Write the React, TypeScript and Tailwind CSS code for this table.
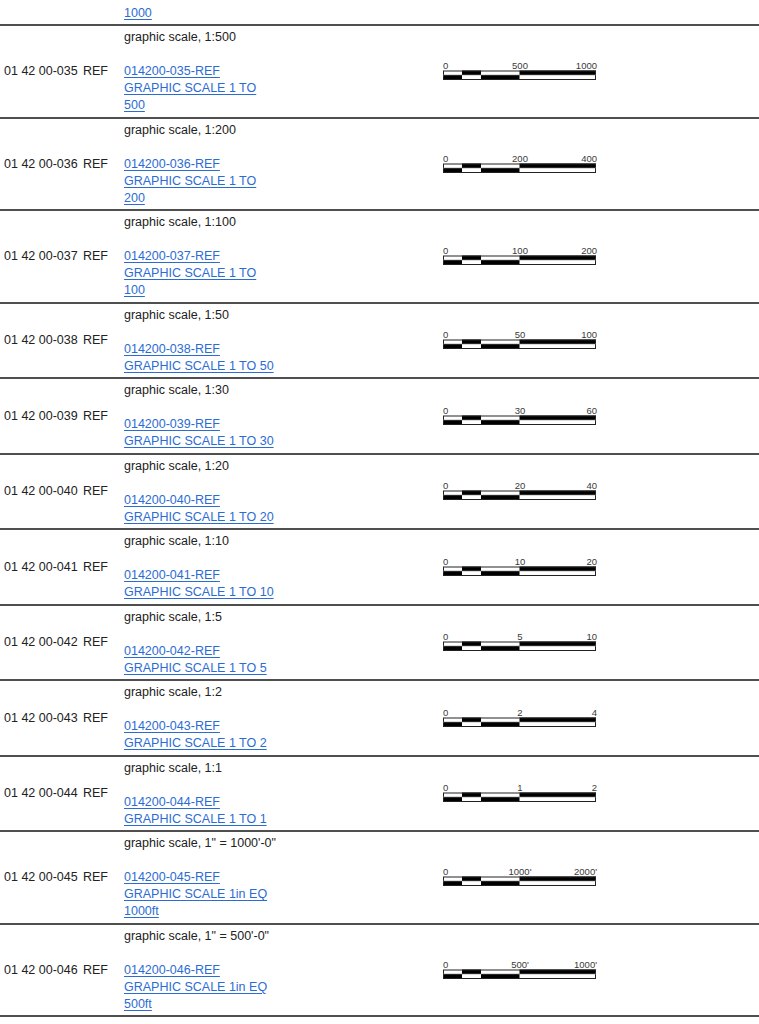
import React from 'react';

type Row = {
  num: string;
  title: string;
  link: [string, string, string?];
  mid: string;
  end: string;
};

const rows: Row[] = [
  { num: '035', title: 'graphic scale, 1:500', link: ['014200-035-REF', 'GRAPHIC SCALE 1 TO', '500'], mid: '500', end: '1000' },
  { num: '036', title: 'graphic scale, 1:200', link: ['014200-036-REF', 'GRAPHIC SCALE 1 TO', '200'], mid: '200', end: '400' },
  { num: '037', title: 'graphic scale, 1:100', link: ['014200-037-REF', 'GRAPHIC SCALE 1 TO', '100'], mid: '100', end: '200' },
  { num: '038', title: 'graphic scale, 1:50', link: ['014200-038-REF', 'GRAPHIC SCALE 1 TO 50'], mid: '50', end: '100' },
  { num: '039', title: 'graphic scale, 1:30', link: ['014200-039-REF', 'GRAPHIC SCALE 1 TO 30'], mid: '30', end: '60' },
  { num: '040', title: 'graphic scale, 1:20', link: ['014200-040-REF', 'GRAPHIC SCALE 1 TO 20'], mid: '20', end: '40' },
  { num: '041', title: 'graphic scale, 1:10', link: ['014200-041-REF', 'GRAPHIC SCALE 1 TO 10'], mid: '10', end: '20' },
  { num: '042', title: 'graphic scale, 1:5', link: ['014200-042-REF', 'GRAPHIC SCALE 1 TO 5'], mid: '5', end: '10' },
  { num: '043', title: 'graphic scale, 1:2', link: ['014200-043-REF', 'GRAPHIC SCALE 1 TO 2'], mid: '2', end: '4' },
  { num: '044', title: 'graphic scale, 1:1', link: ['014200-044-REF', 'GRAPHIC SCALE 1 TO 1'], mid: '1', end: '2' },
  { num: '045', title: 'graphic scale, 1" = 1000\'-0"', link: ['014200-045-REF', 'GRAPHIC SCALE 1in EQ', '1000ft'], mid: "1000'", end: "2000'" },
  { num: '046', title: 'graphic scale, 1" = 500\'-0"', link: ['014200-046-REF', 'GRAPHIC SCALE 1in EQ', '500ft'], mid: "500'", end: "1000'" },
];

// scale bar: 0 | 1/8 | 1/4 | 1/2 | 1
function ScaleBar({ mid, end }: { mid: string; end: string }) {
  const x = [1, 20, 39, 77.5, 154];
  return (
    <svg width="156" height="21" viewBox="0 0 156 21">
      <g fontFamily="'Liberation Sans', Arial, sans-serif" fontSize="9.5" fill="#3a3a3a">
        <text x="1" y="7.5">0</text>
        <text x="78" y="7.5" textAnchor="middle">{mid}</text>
        <text x="155" y="7.5" textAnchor="end">{end}</text>
      </g>
      <rect x="1" y="9.5" width="153" height="9.5" fill="#fff" />
      {/* top half */}
      <rect x={x[1]} y="9.5" width={x[2] - x[1]} height="4.5" fill="#000" />
      <rect x={x[3]} y="9.5" width={x[4] - x[3]} height="4.5" fill="#000" />
      {/* bottom half */}
      <rect x={x[0]} y="14" width={x[1] - x[0]} height="5" fill="#000" />
      <rect x={x[2]} y="14" width={x[3] - x[2]} height="5" fill="#000" />
      <rect x="1.5" y="10" width="152" height="8.5" fill="none" stroke="#222" strokeWidth="1" />
      <line x1="1" y1="14" x2="154" y2="14" stroke="#888" strokeWidth="0.6" />
    </svg>
  );
}

const linkCls = 'text-[#2b6cd4] underline decoration-[#2b6cd4] underline-offset-[2px]';

export default function App() {
  return (
    <div className="w-[759px] bg-white text-[12.5px] leading-[17px] text-[#222]" style={{ fontFamily: "'Liberation Sans', Arial, Helvetica, sans-serif" }}>
      {/* tail of the previous row, scrolled off */}
      <div className="flex h-[26px] items-end border-b-2 border-[#4f4f4f] pb-[2.5px]">
        <div className="w-[124px]" />
        <a href="#" className={linkCls}>1000</a>
      </div>

      {rows.map((r) => (
        <div key={r.num} className="flex items-center border-b-2 border-[#4f4f4f] pt-[3px] pb-[2.5px]">
          <div className="w-[83px] pl-[4px]">01 42 00-{r.num}</div>
          <div className="w-[41px]">REF</div>
          <div className="w-[156px]">
            {r.title}
            <br />
            <br />
            <a href="#" className={linkCls}>
              {r.link[0]}
              <br />
              {r.link[1]}
              {r.link[2] && (
                <>
                  <br />
                  {r.link[2]}
                </>
              )}
            </a>
          </div>
          <div className="flex flex-1 items-center pl-[162px]">
            <ScaleBar mid={r.mid} end={r.end} />
          </div>
        </div>
      ))}
    </div>
  );
}
